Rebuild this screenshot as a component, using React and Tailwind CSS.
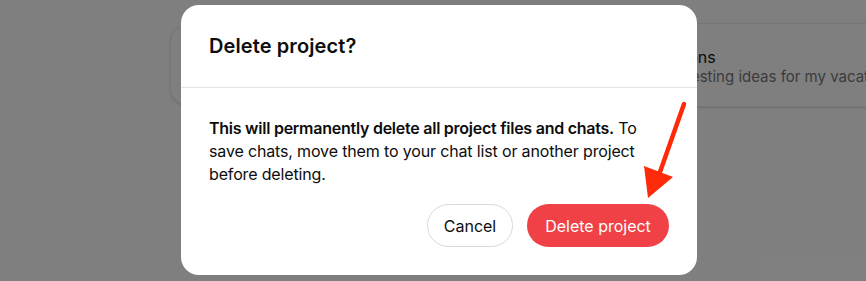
import React from 'react';

function ProjectCard({ title, subtitle, className }) {
  return (
    <div className={'rounded-2xl border border-[#ececec] bg-white shadow-sm ' + className}>
      {title && (
        <div className="flex flex-col pl-[16px] pt-[22px]">
          <span className="text-[16px] leading-[22px] text-[#141414] whitespace-nowrap">{title}</span>
          <span className="text-[15px] leading-[20px] text-[#777] whitespace-nowrap mt-[-1px] ml-[-3px]">{subtitle}</span>
        </div>
      )}
    </div>
  );
}

function Arrow() {
  return (
    <svg className="absolute inset-0 pointer-events-none" width="866" height="281" viewBox="0 0 866 281">
      <line x1="684" y1="104" x2="660" y2="172" stroke="#ff2a0a" strokeWidth="4.5" strokeLinecap="round" />
      <polygon points="644,166 673,177 648,198" fill="#ff2a0a" />
    </svg>
  );
}

export default function App() {
  return (
    <div
      className="relative w-[866px] h-[281px] overflow-hidden bg-white"
      style={{ fontFamily: 'Inter, "Noto Sans", sans-serif' }}
    >
      {/* page behind the modal */}
      <div className="flex gap-[16px] pl-[170px] pt-[23px] w-[1200px]">
        <ProjectCard className="w-[454px] h-[80px] mt-[2px]" />
        <ProjectCard className="w-[420px] h-[84px]" title="Options" subtitle="Suggesting ideas for my vacation" />
      </div>

      {/* overlay */}
      <div className="absolute inset-0 bg-black/50 pl-[181px] pt-[5px]">
        <div className="w-[516px] h-[270px] rounded-[18px] bg-white flex flex-col">
          <div className="h-[83px] flex items-center px-[28px] border-b border-[#e5e5e5]">
            <h2 className="text-[20px] font-semibold text-[#0d0d0d] tracking-[0.1px]">Delete project?</h2>
          </div>
          <div className="flex flex-col px-[28px] pt-[29px]">
            <p className="text-[16px] leading-[23px] text-[#0d0d0d] tracking-[-0.15px]">
              <span className="font-semibold tracking-[-0.25px]">This will permanently delete all project files and chats.</span> To save
              chats, move them to your chat list or another project before deleting.
            </p>
            <div className="flex justify-end gap-[14px] mt-[18px]">
              <button className="h-[43px] w-[86px] rounded-full border border-[#d9d9d9] bg-white text-[16px] text-[#0d0d0d]">
                Cancel
              </button>
              <button className="h-[43px] w-[142px] rounded-full bg-[#ef4146] text-[16px] text-white">
                Delete project
              </button>
            </div>
          </div>
        </div>
      </div>

      <Arrow />
    </div>
  );
}
